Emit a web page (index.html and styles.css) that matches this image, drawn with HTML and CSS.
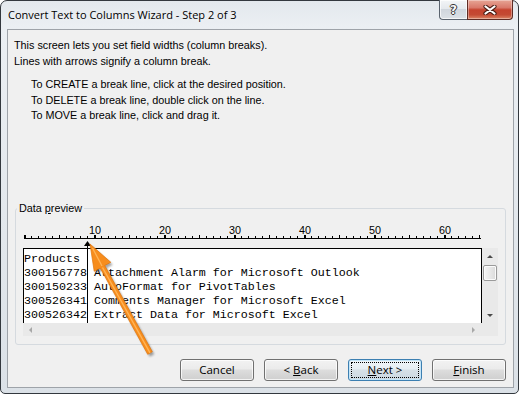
FILE: index.html
```html
<!DOCTYPE html>
<html>
<head>
<meta charset="utf-8">
<title>Convert Text to Columns Wizard</title>
<link rel="stylesheet" href="styles.css">
</head>
<body>
<div class="window">
  <div class="titlebar">
    <div class="title">Convert Text to Columns Wizard - Step 2 of 3</div>
    <div class="caption-btns">
      <div class="cap help">?</div>
      <div class="cap close">
        <svg width="14" height="10" viewBox="0 0 14 10">
          <path d="M2.5 1.5 L11.5 8.5 M11.5 1.5 L2.5 8.5" stroke="#4b1d14" stroke-width="4.2" stroke-linecap="round" fill="none"/>
          <path d="M2.5 1.5 L11.5 8.5 M11.5 1.5 L2.5 8.5" stroke="#ffffff" stroke-width="2.2" stroke-linecap="round" fill="none"/>
        </svg>
      </div>
    </div>
  </div>
  <div class="client">
    <div class="intro">
      <p class="desc">This screen lets you set field widths (column breaks).<br>Lines with arrows signify a column break.</p>
      <p class="howto">To CREATE a break line, click at the desired position.<br>To DELETE a break line, double click on the line.<br>To MOVE a break line, click and drag it.</p>
    </div>
    <fieldset class="group">
      <legend>Data <u>p</u>review</legend>
      <div class="group-body">
        <svg class="ruler" width="462" height="26" viewBox="0 0 462 26">
          <defs>
            <pattern id="tick" x="1" y="0" width="7" height="26" patternUnits="userSpaceOnUse">
              <rect x="0" y="14" width="1" height="2" fill="#000"/>
            </pattern>
          </defs>
          <rect x="1" y="0" width="456" height="26" fill="url(#tick)"/>
          <rect x="1" y="16" width="457" height="1" fill="#000"/>
          <g fill="#000">
            <rect x="1" y="13" width="2" height="3"/>
            <rect x="71" y="13" width="2" height="3"/>
            <rect x="141" y="13" width="2" height="3"/>
            <rect x="211" y="13" width="2" height="3"/>
            <rect x="281" y="13" width="2" height="3"/>
            <rect x="351" y="13" width="2" height="3"/>
            <rect x="421" y="13" width="2" height="3"/>
            <rect x="456" y="13" width="1" height="3"/>
            <rect x="36" y="13" width="1" height="3"/>
            <rect x="106" y="13" width="1" height="3"/>
            <rect x="176" y="13" width="1" height="3"/>
            <rect x="246" y="13" width="1" height="3"/>
            <rect x="316" y="13" width="1" height="3"/>
            <rect x="386" y="13" width="1" height="3"/>
          </g>
          <g class="ruler-num" text-anchor="middle">
            <text x="72" y="12">10</text>
            <text x="142" y="12">20</text>
            <text x="212" y="12">30</text>
            <text x="282" y="12">40</text>
            <text x="352" y="12">50</text>
            <text x="422" y="12">60</text>
          </g>
        </svg>
        <div class="preview">
          <div class="data"><div class="row">Products</div><div class="row">300156778 Attachment Alarm for Microsoft Outlook</div><div class="row">300150233 AutoFormat for PivotTables</div><div class="row">300526341 Comments Manager for Microsoft Excel</div><div class="row">300526342 Extract Data for Microsoft Excel</div></div>
          <div class="vscroll">
            <div class="sb-btn"><span class="tri up"></span></div>
            <div class="thumb"></div>
            <div class="sb-space"></div>
            <div class="sb-btn"><span class="tri down"></span></div>
          </div>
          <div class="hscroll">
            <div class="sb-hbtn"><span class="tri left"></span></div>
            <div class="sb-hbtn"><span class="tri right"></span></div>
          </div>
          <div class="corner"></div>
        </div>
        <div class="break"><div class="break-head"></div><div class="break-line"></div></div>
      </div>
    </fieldset>
    <div class="buttons">
      <div class="btn"><span>Cancel</span></div>
      <div class="btn"><span>&lt; <u>B</u>ack</span></div>
      <div class="btn default"><div class="focus"><span><u>N</u>ext &gt;</span></div></div>
      <div class="btn"><span><u>F</u>inish</span></div>
    </div>
  </div>
</div>
<svg class="annot" width="521" height="397" viewBox="0 0 521 397">
  <defs>
    <filter id="blur" x="-20%" y="-20%" width="140%" height="140%">
      <feGaussianBlur stdDeviation="1.3"/>
    </filter>
  </defs>
  <polygon points="90,244 110.8,262.3 104.7,265.5 152.3,351.7 147.7,354.3 100.3,268.1 94.2,271.3" fill="#000" opacity="0.35" transform="translate(2,2.5)" filter="url(#blur)"/>
  <polygon points="90,244 110.8,262.3 104.7,265.5 152.3,351.7 147.7,354.3 100.3,268.1 94.2,271.3" fill="#f78d1d" stroke="#e2750a" stroke-width="0.7" stroke-linejoin="round"/>
  <path d="M102.5 267.5 L150 352.8" stroke="#ffb456" stroke-width="1.4" fill="none"/>
  <path d="M92.5 248 L102 266" stroke="#ffb456" stroke-width="1.3" fill="none"/>
</svg>
</body>
</html>
```
FILE: styles.css
```css
html, body {
  margin: 0;
  padding: 0;
  background: #ffffff;
}
body {
  position: relative;
  width: 521px;
  height: 397px;
  overflow: hidden;
}
.window {
  width: 519px;
  height: 394px;
  box-sizing: border-box;
  border: 1px solid #33383e;
  border-radius: 7px 7px 5px 5px;
  background: linear-gradient(180deg, #e3e8ed 0, #ebeff3 26px, #e2e7ec 60%, #dbe1e7 100%);
  padding: 0 4px 5px 6px;
  display: flex;
  flex-direction: column;
}
.titlebar {
  height: 28px;
  display: flex;
  align-items: flex-start;
  flex: none;
}
.title {
  flex: 1;
  font: 11px/14px "Open Sans", "Liberation Sans", sans-serif;
  color: #000;
  padding: 7px 0 0 1px;
  text-shadow: 0 0 6px rgba(255,255,255,0.9);
}
.caption-btns {
  display: flex;
  margin: -1px 1px 0 0;
}
.cap {
  height: 20px;
  box-sizing: border-box;
  border: 1px solid #5a636e;
  border-top: none;
  display: flex;
  align-items: center;
  justify-content: center;
}
.help {
  width: 28px;
  border-right: none;
  border-radius: 0 0 0 4px;
  background: linear-gradient(180deg, #f3f5f7 0, #e5e9ed 45%, #d0d6dd 50%, #dce1e6 100%);
  box-shadow: inset 0 0 0 1px rgba(255,255,255,0.7);
  font: bold 12px/12px "DejaVu Sans", sans-serif;
  color: #f7f7f7;
  text-shadow: 1px 0 0 #333, -1px 0 0 #333, 0 1px 0 #333, 0 -1px 0 #333;
}
.close {
  width: 46px;
  border-radius: 0 0 4px 0;
  border-color: #5e2c24;
  background: linear-gradient(180deg, #e7a595 0, #d9796a 40%, #c5432e 52%, #c44a33 78%, #dc8666 100%);
  box-shadow: inset 0 0 0 1px rgba(255,255,255,0.35);
}
.close svg { display: block; }

.client {
  flex: 1;
  background: #f0f0f0;
  border: 1px solid #9ea3a9;
  display: flex;
  flex-direction: column;
  font: 10.8px "Liberation Sans", Arial, sans-serif;
  color: #000;
}
.intro {
  padding: 7px 0 0 6px;
}
.intro p { margin: 0; }
.desc { line-height: 16px; }
.howto {
  line-height: 15.5px;
  margin-top: 8.25px !important;
  padding-left: 17px;
}
.group {
  margin: 78.25px 7px 0 7px;
  padding: 0;
  border: 1px solid #d5dadf;
  border-radius: 3px;
  min-width: 0;
}
.group legend {
  padding: 0 2px;
  margin-left: 1px;
  font: 10.8px/13px "Liberation Sans", Arial, sans-serif;
  color: #000;
}
.group-body {
  position: relative;
  padding: 7px 0 8px 7px;
}
.ruler {
  display: block;
}
.ruler-num {
  font: 10.8px "Liberation Sans", Arial, sans-serif;
  fill: #000;
}
.preview {
  display: grid;
  grid-template-columns: 459px 16px;
  grid-template-rows: 75px 13px;
  width: 475px;
}
.data {
  background: #fff;
  border: 1px solid #000;
  border-bottom: none;
  box-sizing: border-box;
  overflow: hidden;
  font: 11.67px/14px "Liberation Mono", "Courier New", monospace;
  color: #000;
  padding-top: 3px;
}
.row {
  white-space: pre;
  height: 14px;
}
.vscroll {
  background: #e9e9e9;
  display: flex;
  flex-direction: column;
}
.sb-btn {
  height: 17px;
  display: flex;
  align-items: center;
  justify-content: center;
  flex: none;
}
.sb-btn:last-child { height: 16px; }
.thumb {
  height: 16px;
  margin: 0 1px;
  box-sizing: border-box;
  border: 1px solid #9a9a9a;
  border-radius: 2px;
  background: linear-gradient(90deg, #f6f6f6, #e8e8e8 50%, #dadada);
  box-shadow: inset 0 0 0 1px #fbfbfb;
  flex: none;
}
.sb-space { flex: 1; }
.hscroll {
  background: #e9e9e9;
  display: flex;
  justify-content: space-between;
  padding-right: 2px;
}
.sb-hbtn {
  width: 14px;
  display: flex;
  align-items: center;
  justify-content: center;
}
.corner { background: #e9e9e9; }
.tri {
  width: 0;
  height: 0;
  display: block;
}
.tri.up {
  border-left: 3px solid transparent;
  border-right: 3px solid transparent;
  border-bottom: 3px solid #4a4a4a;
}
.tri.down {
  border-left: 3px solid transparent;
  border-right: 3px solid transparent;
  border-top: 3px solid #4a4a4a;
}
.tri.left {
  border-top: 3px solid transparent;
  border-bottom: 3px solid transparent;
  border-right: 3px solid #a8a8a8;
}
.tri.right {
  border-top: 3px solid transparent;
  border-bottom: 3px solid transparent;
  border-left: 3px solid #a8a8a8;
}
.break {
  position: absolute;
  left: 68px;
  top: 26px;
  width: 7px;
  height: 82px;
  display: flex;
  flex-direction: column;
  align-items: center;
}
.break-head {
  width: 7px;
  height: 5px;
  background: #000;
  clip-path: polygon(50% 0, 100% 100%, 0 100%);
  flex: none;
}
.break-line {
  width: 1px;
  flex: 1;
  background: #000;
}

.buttons {
  margin-top: auto;
  display: flex;
  justify-content: flex-end;
  gap: 10px;
  padding: 0 7px 6px 0;
}
.btn {
  width: 74px;
  height: 22px;
  box-sizing: border-box;
  border: 1px solid #707070;
  border-radius: 3px;
  background: linear-gradient(180deg, #f2f2f2 0, #ebebeb 45%, #dddddd 50%, #cfcfcf 100%);
  box-shadow: inset 0 0 0 1px rgba(255,255,255,0.75);
  font: 11.5px/14px "Open Sans", "Liberation Sans", sans-serif;
  color: #000;
  display: flex;
  align-items: center;
  justify-content: center;
  white-space: pre;
}
.btn.default {
  border-color: #3c7fb1;
  box-shadow: inset 0 0 0 1px #c4e5f8;
  background: linear-gradient(180deg, #f0f5f8 0, #e6eef3 45%, #d6e0e7 50%, #cbd8e1 100%);
  padding: 2px;
}
.focus {
  flex: 1;
  align-self: stretch;
  border: 1px dotted #000;
  display: flex;
  align-items: center;
  justify-content: center;
}
.annot {
  position: absolute;
  left: 0;
  top: 0;
  pointer-events: none;
}
```
